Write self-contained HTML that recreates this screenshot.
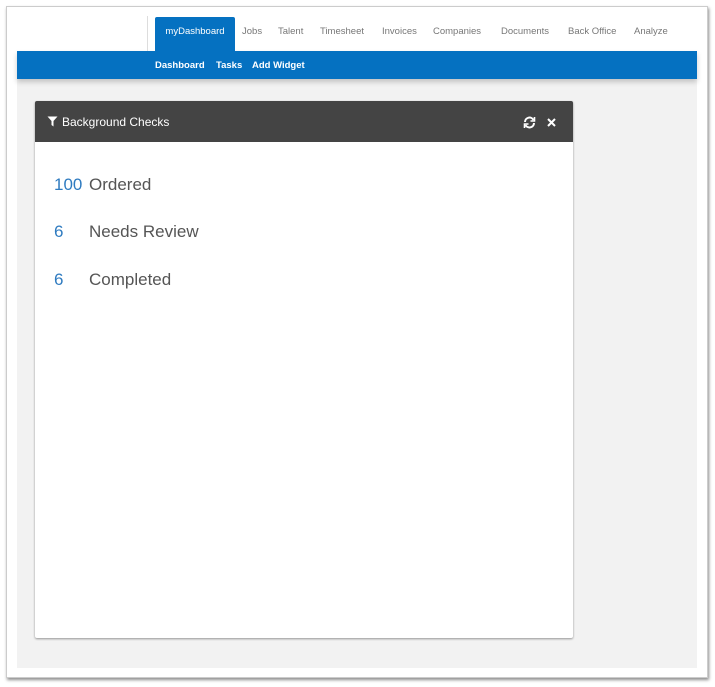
<!DOCTYPE html>
<html><head><style>
body{margin:0;width:715px;height:687px;background:#fff;position:relative;overflow:hidden;font-family:"Liberation Sans",sans-serif}
.frame{position:absolute;left:6px;top:6px;width:700px;height:670px;background:#fff;border:1px solid #ccc;box-shadow:1px 2px 3px rgba(0,0,0,.45)}
.gray{position:absolute;left:17px;top:79px;width:680px;height:589px;background:#f2f2f2}
.blue{position:absolute;left:17px;top:51px;width:680px;height:28px;background:#0571c1;box-shadow:0 3px 5px rgba(0,0,0,.2)}
.sep{position:absolute;left:147px;top:16px;width:1px;height:35px;background:#ddd}
.tab{position:absolute;left:155px;top:17px;width:80px;height:34px;background:#0571c1;border-radius:2px 2px 0 0;color:#fff;font-size:9.5px;line-height:29px;text-align:center}
.nav{position:absolute;top:26px;font-size:9.5px;color:#777}
.sub{position:absolute;top:60px;font-size:9.5px;color:#fff;font-weight:bold}
.panel{position:absolute;left:35px;top:101px;width:538px;height:537px;background:#fff;box-shadow:0 1px 2px rgba(0,0,0,.4);border-radius:2px}
.hd{height:41px;background:#444;color:#fff;font-size:12px;line-height:43px;padding-left:27px;position:relative;border-radius:2px 2px 0 0}
.row{position:absolute;left:19px;font-size:17px;color:#555}
.row b{font-weight:normal;color:#2f7bc0;display:inline-block;width:35px}
</style></head><body>
<div class="frame"></div>
<div class="gray"></div>
<div class="blue"></div>
<div class="sep"></div>
<div class="tab">myDashboard</div>
<span class="nav" style="left:242px">Jobs</span>
<span class="nav" style="left:278px">Talent</span>
<span class="nav" style="left:320px">Timesheet</span>
<span class="nav" style="left:382px">Invoices</span>
<span class="nav" style="left:433px">Companies</span>
<span class="nav" style="left:501px">Documents</span>
<span class="nav" style="left:568px">Back Office</span>
<span class="nav" style="left:634px">Analyze</span>
<span class="sub" style="left:155px">Dashboard</span>
<span class="sub" style="left:216px">Tasks</span>
<span class="sub" style="left:252px">Add Widget</span>
<div class="panel">
<div class="hd">
<svg style="position:absolute;left:12px;top:15px" width="11" height="11" viewBox="0 0 11 11"><path d="M0.5 0.5H10.5L6.5 5V10.5L4.5 9V5Z" fill="#fff"/></svg>
Background Checks
<svg style="position:absolute;left:488px;top:15px" width="13" height="13" viewBox="0 0 13 13" fill="none" stroke="#fff" stroke-width="2"><path d="M2 6A4.5 4.5 0 0 1 10.5 4"/><path d="M11 7A4.5 4.5 0 0 1 2.5 9"/><path d="M11.5 1V5H7.5" stroke-width="1.6"/><path d="M1.5 12V8H5.5" stroke-width="1.6"/></svg>
<svg style="position:absolute;left:512px;top:17px" width="9" height="9" viewBox="0 0 9 9" stroke="#fff" stroke-width="2"><path d="M1 1L8 8M8 1L1 8"/></svg>
</div>
<div class="row" style="top:74px"><b>100</b>Ordered</div>
<div class="row" style="top:121px"><b>6</b>Needs Review</div>
<div class="row" style="top:169px"><b>6</b>Completed</div>
</div>
</body></html>
